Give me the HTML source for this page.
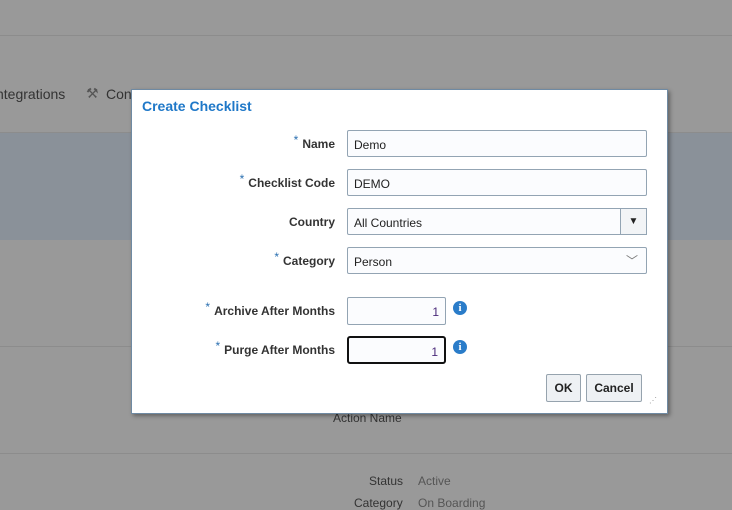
<!DOCTYPE html>
<html style="background:#999"><head><style>
html,body{background:#999}
body{margin:0;width:732px;height:508px;overflow:hidden;font-family:"Liberation Sans",Arial,sans-serif;position:relative}
.a{position:absolute}
.ln{position:absolute;left:0;width:732px;height:1px;background:#8c8c8c}
.lbl{position:absolute;font-size:12px;font-weight:bold;color:#333;text-align:right;right:0}
.st{color:#2a6fb0;font-weight:normal;margin-right:4px;position:relative;top:-4px}
.inp{position:absolute;left:347px;width:300px;height:26px;border:1px solid #93a4b3;border-radius:2px;background:#fbfcfe;box-sizing:border-box;font-size:12px;color:#222;padding:7px 6px}
.info{position:absolute;width:14px;height:14px;border-radius:50%;background:#2a7cc9;color:#fff;font:bold 11px "Liberation Serif",serif;text-align:center;line-height:14px}
.btn{position:absolute;height:28px;top:374px;border:1px solid #96a3ae;border-radius:2px;background:#eef1f4;box-sizing:border-box;font-size:12px;font-weight:bold;color:#222;text-align:center;line-height:26px}
</style></head><body>
<div class="ln" style="top:35px"></div>
<div class="a" style="left:0;top:133px;width:732px;height:107px;background:#8a9199"></div>
<div class="ln" style="top:132px"></div>
<div class="ln" style="top:346px"></div>
<div class="ln" style="top:453px"></div>
<div class="a" style="left:-4px;top:86px;font-size:14px;color:#333">ntegrations</div>
<div class="a" style="left:86px;top:85px;font-size:14px;color:#555">⚒</div>
<div class="a" style="left:106px;top:86px;font-size:14px;color:#333">Configuration</div>
<div class="a" style="left:333px;top:411px;font-size:12px;color:#333">Action Name</div>
<div class="a" style="left:369px;top:474px;font-size:12px;color:#333">Status</div>
<div class="a" style="left:418px;top:474px;font-size:12px;color:#555">Active</div>
<div class="a" style="left:354px;top:496px;font-size:12px;color:#333">Category</div>
<div class="a" style="left:418px;top:496px;font-size:12px;color:#555">On Boarding</div>

<div class="a" style="left:131px;top:89px;width:535px;height:323px;background:#fff;border:1px solid #6f8aa3;box-shadow:2px 2px 4px rgba(0,0,0,.35)"></div>
<div class="a" style="left:142px;top:98px;font-size:14px;font-weight:bold;color:#1f78c8">Create Checklist</div>
<div class="a" style="left:0;top:0;width:335px">
<div class="lbl" style="top:137px"><span class="st">*</span>Name</div>
<div class="lbl" style="top:176px"><span class="st">*</span>Checklist Code</div>
<div class="lbl" style="top:215px">Country</div>
<div class="lbl" style="top:254px"><span class="st">*</span>Category</div>
<div class="lbl" style="top:304px"><span class="st">*</span>Archive After Months</div>
<div class="lbl" style="top:343px"><span class="st">*</span>Purge After Months</div>
</div>
<div class="inp" style="top:130px;height:27px">Demo</div>
<div class="inp" style="top:169px;height:27px">DEMO</div>
<div class="inp" style="top:208px;height:27px">All Countries</div>
<div class="a" style="left:620px;top:208px;width:27px;height:27px;border:1px solid #93a4b3;box-sizing:border-box;background:#f2f4f6;font-size:10px;text-align:center;line-height:25px;color:#222">▼</div>
<div class="inp" style="top:247px;height:27px">Person</div>
<div class="a" style="left:626px;top:252px;font-size:12px;color:#777">﹀</div>
<div class="inp" style="top:297px;width:99px;height:28px;text-align:right;color:#4a2a7a">1</div>
<div class="inp" style="top:336px;width:99px;height:28px;text-align:right;border:2px solid #111;border-radius:3px;color:#4a2a7a">1</div>
<div class="info" style="left:453px;top:301px">i</div>
<div class="info" style="left:453px;top:340px">i</div>
<div class="btn" style="left:546px;width:35px">OK</div>
<div class="btn" style="left:586px;width:56px">Cancel</div>
<div class="a" style="left:649px;top:396px;font-size:8px;color:#999">⋰</div>
</body></html>
